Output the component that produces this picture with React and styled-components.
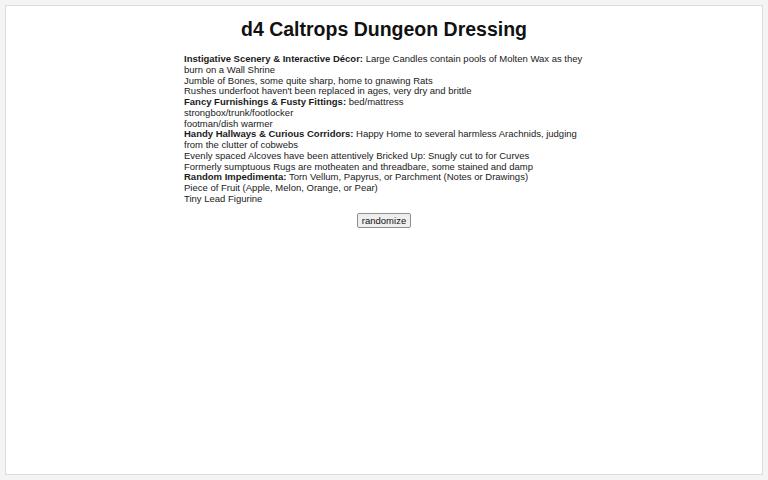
import React, { useState } from "react";
import styled, { createGlobalStyle } from "styled-components";

const GlobalStyle = createGlobalStyle`
  html, body {
    margin: 0;
    padding: 0;
    height: 100%;
    background: #f4f4f4;
  }
  body {
    font-family: "Liberation Sans", Arial, sans-serif;
    color: #111;
  }
  #root {
    height: 100%;
  }
`;

const Page = styled.div`
  box-sizing: border-box;
  height: 100%;
  padding: 5px;
`;

const Card = styled.div`
  box-sizing: border-box;
  height: 100%;
  background: #fff;
  border: 1px solid #dcdcdc;
  padding: 11px 0 0;
`;

const Title = styled.h1`
  margin: 0 0 13px;
  text-align: center;
  font-size: 19.5px;
  font-weight: bold;
  line-height: 24px;
  color: #111;
`;

const Table = styled.div`
  width: 402px;
  margin: 0 auto;
  padding-left: 2px;
  font-size: 9.5px;
  line-height: 10.77px;
  color: #1a1a1a;
`;

const Line = styled.div``;

const Label = styled.b`
  font-weight: bold;
`;

const Actions = styled.div`
  display: flex;
  justify-content: center;
  margin-top: 8px;
`;

const Button = styled.button`
  font-family: "Liberation Sans", Arial, sans-serif;
  font-size: 9.5px;
  line-height: 11px;
  padding: 1px 4px;
  color: #111;
  background: #efefef;
  border: 1px solid #8f8f8f;
  border-radius: 2px;
  cursor: pointer;
`;

const sections = [
  {
    title: "Instigative Scenery & Interactive Décor",
    items: [
      "Large Candles contain pools of Molten Wax as they burn on a Wall Shrine",
      "Jumble of Bones, some quite sharp, home to gnawing Rats",
      "Rushes underfoot haven't been replaced in ages, very dry and brittle",
    ],
  },
  {
    title: "Fancy Furnishings & Fusty Fittings",
    items: ["bed/mattress", "strongbox/trunk/footlocker", "footman/dish warmer"],
  },
  {
    title: "Handy Hallways & Curious Corridors",
    items: [
      "Happy Home to several harmless Arachnids, judging from the clutter of cobwebs",
      "Evenly spaced Alcoves have been attentively Bricked Up: Snugly cut to for Curves",
      "Formerly sumptuous Rugs are motheaten and threadbare, some stained and damp",
    ],
  },
  {
    title: "Random Impedimenta",
    items: [
      "Torn Vellum, Papyrus, or Parchment (Notes or Drawings)",
      "Piece of Fruit (Apple, Melon, Orange, or Pear)",
      "Tiny Lead Figurine",
    ],
  },
];

export default function App() {
  const [seed, setSeed] = useState(0);

  return (
    <Page>
      <GlobalStyle />
      <Card>
        <Title>d4 Caltrops Dungeon Dressing</Title>
        <Table key={seed}>
          {sections.map((s) => (
            <React.Fragment key={s.title}>
              <Line>
                <Label>{s.title}:</Label> {s.items[0]}
              </Line>
              {s.items.slice(1).map((item) => (
                <Line key={item}>{item}</Line>
              ))}
            </React.Fragment>
          ))}
        </Table>
        <Actions>
          <Button onClick={() => setSeed(seed + 1)}>randomize</Button>
        </Actions>
      </Card>
    </Page>
  );
}
